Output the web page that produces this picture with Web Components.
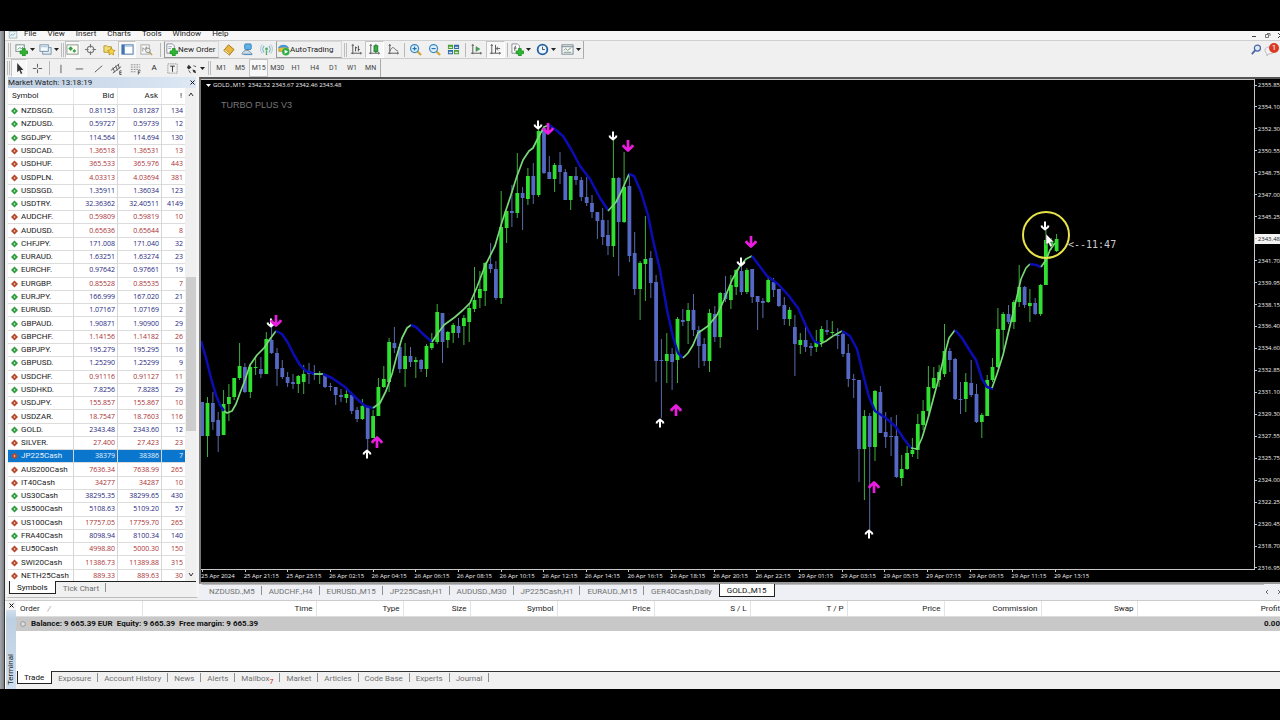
<!DOCTYPE html>
<html lang="en">
<head>
<meta charset="utf-8">
<title>GOLD.,M15</title>
<style>
html,body{margin:0;height:100%;background:#000}
body{overflow:hidden;font-family:Roboto,"Open Sans",sans-serif;font-size:8px;line-height:12px;color:#1c1c1c;--figures:"Open Sans","Noto Sans",sans-serif}
</style>
</head>
<body>
<mt-app></mt-app>
<script>
const define=(name,html,init)=>customElements.define(name,class extends HTMLElement{
  connectedCallback(){
    if(this.shadowRoot)return;
    const root=this.attachShadow({mode:'open'});
    root.innerHTML=typeof html==='function'?html(this):html;
    if(init)init(this,root);
  }
});

/* ---------- icons, drawn on a 14 x 14 grid ---------- */
const CARET='<path d="M0 0h5L2.500 3z" fill="#222"/>';
const AXES='<path d="M3 2v10M1 11h11M2 3l1-1.500L4 3M11 10l1.500 1L11 12" fill="none" stroke="#555"/>';
const PLUS='<path d="M8 6h3v2.500h2.500v3H11V14H8v-2.500H5.500v-3H8z" fill="#2fb52f" stroke="#128a1c" stroke-width=".8"/>';
const ICONS={
  newchart:'<rect x="1" y="2" width="9" height="7" fill="#fff" stroke="#6f8a80"/><path d="M3 7l2-2 2 1 2-2" fill="none" stroke="#4a9a60"/>'+PLUS,
  profiles:'<rect x="4" y="5" width="9" height="7" fill="#e8f0f6" stroke="#6f8fa8"/><rect x="1" y="2" width="9" height="7" fill="#f4f9fc" stroke="#6f8fa8"/><path d="M2 4h7" stroke="#9fc0d8"/>',
  watch:'<rect x="1" y="2" width="12" height="10" fill="#fdfdf6" stroke="#8a958a"/><path d="M5 3.500L7.500 6 5 8.500 2.500 6z" fill="#35a045"/><path d="M9 6.500l2 2-2 2-2-2z" fill="#35a045"/>',
  data:'<circle cx="7" cy="7" r="3.500" fill="none" stroke="#777" stroke-width="1.200"/><path d="M7 1v4M7 9v4M1 7h4M9 7h4" stroke="#777" stroke-width="1.200"/>',
  navigator:'<path d="M1 3h3l1 1h4v6H1z" fill="#f1dc79" stroke="#b6982c"/><path d="M9 5l1.300 2.600 2.900.4-2.100 2 .5 2.900L9 11.500 6.400 12.900l.5-2.900-2.100-2 2.900-.4z" fill="#fbd33c" stroke="#a8861b" stroke-width=".7"/>',
  terminal:'<rect x="1" y="2" width="12" height="10" fill="#fff" stroke="#3f6fa8"/><rect x="1" y="2" width="3" height="10" fill="#3f74b4"/><path d="M4 3.500h9" stroke="#9bb8d8"/>',
  tester:'<rect x="1" y="2" width="9" height="10" fill="#f8f8f8" stroke="#a5a5a5"/><path d="M3 9V5l2 2 2-3v3" fill="none" stroke="#999"/><circle cx="8.500" cy="8" r="2.500" fill="#e6eee6" stroke="#888"/><path d="M10.500 10l2.500 3" stroke="#c29b4a" stroke-width="1.500"/>',
  order:'<path d="M2 1h6l2 2v8H2z" fill="#fff" stroke="#889"/><path d="M3.500 4h4M3.500 6h3" stroke="#8aa"/>'+PLUS,
  editor:'<path d="M2 8l5-6 6 5-5 6z" fill="#e9b63f" stroke="#a87614"/><path d="M2 8l6 5v-2L3.500 7z" fill="#fff0b8" stroke="#a87614" stroke-width=".6"/>',
  community:'<rect x="4" y="1" width="7" height="6" rx="1" fill="#5fb2e6" stroke="#3b82b4"/><path d="M1 12c1-3 3-4 5-4s4 1 6 4z" fill="#cfdfe9" stroke="#6d8ea5"/><path d="M3 12.500h9" stroke="#4a90c0"/>',
  signals:'<circle cx="7" cy="6.500" r="1.600" fill="#5cab6a"/><path d="M4.500 3a5 5 0 000 7M9.500 3a5 5 0 010 7" fill="none" stroke="#6aaec0" stroke-width="1.200"/><path d="M2.500 1.500a7.500 7.500 0 000 10M11.500 1.500a7.500 7.500 0 010 10" fill="none" stroke="#a6c6d0"/><path d="M7 8v5" stroke="#5cab6a" stroke-width="1.500"/>',
  auto:'<path d="M2 6c0-3 10-3 10 0v3H2z" fill="#e9bd3a" stroke="#a07a18" stroke-width=".7"/><path d="M1 5.500c2-5 10-5 12 0-3-1-9-1-12 0z" fill="#4a96d2"/><circle cx="9.500" cy="9.500" r="4" fill="#2fae43"/><path d="M8.200 7.300l3.800 2.200-3.800 2.200z" fill="#fff"/>',
  bars:AXES+'<path d="M6 4v5M9 3v6M6 5h1.500M9 7h1.500" stroke="#444"/>',
  candles:AXES+'<path d="M8.500 1v10" stroke="#1c7a2a"/><rect x="6.500" y="3" width="4" height="6" fill="#35b04a" stroke="#1c7a2a"/>',
  line:AXES+'<path d="M3 9c2-5 4-5 6-2l3 2" fill="none" stroke="#666"/>',
  zoomin:'<path d="M8.500 8.500L13 13" stroke="#d2a93b" stroke-width="2.400"/><circle cx="6" cy="6" r="4.300" fill="#dff0fa" stroke="#3a87c0" stroke-width="1.300"/><path d="M3.800 6h4.400M6 3.800v4.400" stroke="#2474b2" stroke-width="1.300"/>',
  zoomout:'<path d="M8.500 8.500L13 13" stroke="#d2a93b" stroke-width="2.400"/><circle cx="6" cy="6" r="4.300" fill="#dff0fa" stroke="#3a87c0" stroke-width="1.300"/><path d="M3.800 6h4.400" stroke="#2474b2" stroke-width="1.300"/>',
  tile:'<path d="M1 2h5.500v4.500H1zM7.500 7.500H13V12H7.500z" fill="#4a9e36"/><path d="M7.500 2H13v4.500H7.500zM1 7.500h5.500V12H1z" fill="#2f68ad"/><path d="M2 4h3.500v1.500H2zM8.500 4H12v1.500H8.500zM2 9.500h3.500V11H2zM8.500 9.500H12V11H8.500z" fill="#d6e8d4"/>',
  scroll:AXES+'<path d="M6.500 4v5l4-2.500z" fill="#45a555" stroke="#287a38" stroke-width=".6"/>',
  shift:AXES+'<path d="M7 2v9M12 6H8M9.500 4L8 6l1.500 2" fill="none" stroke="#555"/>',
  indicators:'<path d="M1 1h6l2 2v8H1z" fill="#fff" stroke="#889"/><path d="M5.500 3C4 3 4.500 5 4 8.500M3 5.500h3" stroke="#555" fill="none"/>'+PLUS,
  clock:'<circle cx="7" cy="7" r="5.200" fill="#eef6fd" stroke="#2462a4" stroke-width="2"/><path d="M7 4v3h2.500" fill="none" stroke="#345"/>',
  template:'<rect x="1" y="2" width="12" height="10" fill="#f6f8f8" stroke="#718290"/><path d="M1 4h12" stroke="#718290"/><path d="M3 8l2-2 2 2 4-3M3 10h8" fill="none" stroke="#809080"/>',
  cursor:'<path d="M4.500 1v10l2.300-2 1.700 3.800 1.500-.7L8.300 8.500h3z" fill="#333"/>',
  cross:'<path d="M7 2v4M7 8v4M2 7h4M8 7h4" stroke="#555"/>',
  vline:'<path d="M7.500 3v9" stroke="#555"/>',
  hline:'<path d="M3 7.500h8" stroke="#555"/>',
  trend:'<path d="M3 11l8-7" stroke="#555"/>',
  channel:'<path d="M1 9l9-7M3 12l9-7M3 6l2 5M6 4l2 5M9 3l1 4" stroke="#555" fill="none"/><path d="M12.500 9.500h-2v4h2M10.500 11.500h2" stroke="#333" fill="none" stroke-width=".8"/>',
  fibo:'<path d="M2 3h10M2 5.500h10M2 8h10M2 10.500h6" stroke="#888" stroke-dasharray="2 1"/><path d="M10 13.500v-4h2.500M10 11.500h2" stroke="#333" fill="none" stroke-width=".8"/>',
  label:'<rect x="2" y="2" width="10" height="10" fill="none" stroke="#777" stroke-dasharray="1 1"/><path d="M4.500 4.500h5M7 4.500v6" stroke="#333" fill="none"/>',
  arrows:'<path d="M4 3l3 3-3 2-2-2zM8 8l3 1 1 3-3-1z" fill="#333"/><path d="M9 4l3 1M4 9l2 3" stroke="#555"/>',
  search:'<circle cx="8" cy="5.500" r="3.300" fill="#dfe8f6" stroke="#4b66a5" stroke-width="1.300"/><path d="M5.500 8L2 12" stroke="#4b66a5" stroke-width="2"/>',
  chat:'<path d="M1 7c0-4 9-4 9 0s-4 4-6 4l-1 2v-2.500C2 10 1 9 1 7z" fill="#f3f3f3" stroke="#bbb"/>',
  app:'<rect x="1" y="1" width="12" height="10" fill="#e9f2f4" stroke="#8aa5b0"/><path d="M3 8l2-3 2 2 3-4" fill="none" stroke="#6ca0b8"/>'
};
define('mt-icon',el=>`<style>:host{display:block;flex:none;width:14px;height:14px}svg{display:block;width:100%;height:100%}</style>
<svg viewBox="0 0 14 14" aria-hidden="true">${ICONS[el.getAttribute('name')]}</svg>`);

/* A toolbar button: icon, optional label in the slot, optional drop-down caret. */
define('mt-tool',el=>`<style>
:host{display:block;flex:none;width:var(--w,19px);height:100%}
button{all:unset;box-sizing:border-box;display:flex;align-items:center;justify-content:center;gap:2px;width:100%;height:100%;white-space:nowrap}
:host([pressed]) button{background:#f8f8f8;border:1px solid #c4c4c4;border-right-color:#fff;border-bottom-color:#fff}
:host([framed]) button{border:1px solid #d8d8d8;border-left-color:#999;border-bottom-color:#999;justify-content:flex-start;gap:0}
.caret{flex:none;width:5px;height:3px;display:block}
mt-icon{width:13px;height:13px}
</style><button type="button" aria-label="${el.getAttribute('label')||el.textContent}">
${el.hasAttribute('icon')?`<mt-icon name="${el.getAttribute('icon')}"></mt-icon>`:''}<slot></slot>
${el.hasAttribute('menu')?`<svg class="caret" viewBox="0 0 5 3">${CARET}</svg>`:''}</button>`);
define('mt-grip',`<style>:host{display:flex;flex:none;width:var(--w,5px);height:100%;align-items:center;justify-content:center;gap:1px}
i{width:1px;height:14px;background:#bdbdbd}</style><i></i><i></i>`);
define('mt-sep',`<style>:host{display:flex;flex:none;width:var(--w,4px);height:100%;align-items:center;justify-content:center}
i{width:1px;height:14px;background:#b8b8b8}</style><i></i>`);

define('mt-menubar',`<style>
:host{display:flex;height:9px;background:#f7f7f7;border-bottom:1px solid #cfcfcf;padding-left:6px}
nav{display:flex;gap:11px;padding-left:4px}
a{color:#222;text-decoration:none;line-height:6px}
mt-icon{width:14px;height:9px}
.win{margin-left:auto;display:flex;gap:6px;margin-right:-4px}
button{all:unset;width:7px;height:8px}
svg{display:block}
</style><mt-icon name="app"></mt-icon>
<nav>${['File','View','Insert','Charts','Tools','Window','Help'].map(t=>`<a href="#">${t}</a>`).join('')}</nav>
<div class="win"><button type="button" aria-label="Minimize"><svg width="7" height="7"><path d="M1 4.500h4" stroke="#444"/></svg></button>
<button type="button" aria-label="Restore"><svg width="7" height="7"><path d="M1.500 2.500h3v3h-3zM3 1.500h3V4" fill="none" stroke="#777"/></svg></button>
<button type="button" aria-label="Close"><svg width="7" height="7"><path d="M1 1l5 5M6 1L1 6" stroke="#444"/></svg></button></div>`);

define('mt-toolbar',`<style>:host{display:flex;align-items:center;height:18px;box-sizing:border-box;overflow:hidden;background:#f0f0f0;padding-left:6px}
.bar{display:flex;height:100%;box-sizing:border-box;border-right:1px solid #aaa}
:host([lined]) .bar{border-bottom:1px solid #ccc}
.end{margin-left:auto;display:flex}
</style><div class="bar"><slot></slot></div><div class="end"><slot name="end"></slot></div>`);

define('mt-timeframes',`<style>:host{display:grid;grid-template-columns:repeat(9,1fr);width:168px;height:100%;font-size:7px;color:#444}
button{all:unset;text-align:center;box-sizing:border-box;border:1px solid transparent;line-height:16px}
button[aria-pressed=true]{border-color:#c4c4c4;background:#f8f8f8}
</style>${['M1','M5','M15','M30','H1','H4','D1','W1','MN'].map(t=>`<button type="button" aria-pressed="${t==='M15'}">${t}</button>`).join('')}`);

define('mt-badge',`<style>:host{display:block;position:relative;width:16px;height:14px}
b{position:absolute;left:5px;top:0;width:10px;height:10px;border-radius:5px;background:#d93a26;color:#fff;font-size:8px;line-height:10px;text-align:center;font-weight:400}
</style><mt-icon name="chat"></mt-icon><b>1</b>`);

/* ---------- market watch ---------- */
const QUOTES=`NZDSGD.|0.81153|0.81287|134|u
NZDUSD.|0.59727|0.59739|12|u
SGDJPY.|114.564|114.694|130|u
USDCAD.|1.36518|1.36531|13|d
USDHUF.|365.533|365.976|443|d
USDPLN.|4.03313|4.03694|381|d
USDSGD.|1.35911|1.36034|123|u
USDTRY.|32.36362|32.40511|4149|u
AUDCHF.|0.59809|0.59819|10|d
AUDUSD.|0.65636|0.65644|8|d
CHFJPY.|171.008|171.040|32|u
EURAUD.|1.63251|1.63274|23|u
EURCHF.|0.97642|0.97661|19|u
EURGBP.|0.85528|0.85535|7|d
EURJPY.|166.999|167.020|21|u
EURUSD.|1.07167|1.07169|2|u
GBPAUD.|1.90871|1.90900|29|u
GBPCHF.|1.14156|1.14182|26|d
GBPJPY.|195.279|195.295|16|u
GBPUSD.|1.25290|1.25299|9|u
USDCHF.|0.91116|0.91127|11|d
USDHKD.|7.8256|7.8285|29|u
USDJPY.|155.857|155.867|10|d
USDZAR.|18.7547|18.7603|116|d
GOLD.|2343.48|2343.60|12|u
SILVER.|27.400|27.423|23|d
JP225Cash|38379|38386|7|d
AUS200Cash|7636.34|7638.99|265|d
IT40Cash|34277|34287|10|d
US30Cash|38295.35|38299.65|430|u
US500Cash|5108.63|5109.20|57|u
US100Cash|17757.05|17759.70|265|d
FRA40Cash|8098.94|8100.34|140|u
EU50Cash|4998.80|5000.30|150|d
SWI20Cash|11386.73|11389.88|315|d
NETH25Cash|889.33|889.63|30|d`.split('\n').map(l=>l.split('|'));

define('mt-market-watch',`<style>
:host{display:flex;flex-direction:column;width:193px;box-sizing:border-box;background:#f0f0f0;border-right:3px solid #f4f4f4;border-left:2px solid #f4f4f4;min-height:0;margin-bottom:2px;border-bottom:1px solid #bbb}
header{display:flex;justify-content:space-between;align-items:center;height:11px;background:linear-gradient(90deg,#bfcfe2,#dde8f4);font-size:8px;line-height:11px}
header button{all:unset;width:8px;height:11px;display:grid;place-items:center}
.body{flex:1;min-height:0;display:flex;overflow:hidden;background:#fff}
table{flex:none;width:177px;display:flex;flex-direction:column;border-collapse:collapse;margin-bottom:-2px}
tbody{flex:1;display:grid;grid-auto-rows:1fr}
tr{display:grid;grid-template-columns:66px 44px 44px 23px;align-items:stretch}
thead tr{height:17px;border-bottom:1px solid #ddd;box-sizing:border-box}
th,td{padding:0 2px 0 0;box-sizing:border-box;border-right:1px solid #d6d6d6;text-align:right;font-weight:400;white-space:nowrap;line-height:12px}
td{border-bottom:1px solid #dcdcdc;font-family:var(--figures);font-size:7px;display:flex;align-items:center;justify-content:flex-end}
th{border-color:#e8e8e8;line-height:16px;padding-right:3px}
th:first-child{text-align:left;padding-left:4px}
td:first-child{justify-content:flex-start;gap:3px;padding-left:3px;color:#1c1c1c;font-family:Roboto,sans-serif;font-size:8px}
td:last-child,th:last-child{border-right:0}
.u{color:#26267c}.d{color:#a83236}
.sel td,.sel td:first-child{background:#0a76cd;color:#e8f2fc}
svg{flex:none}
.scroll{flex:1;background:#f0f0f0;display:flex;flex-direction:column;align-items:center}
.scroll i{width:10px;height:154px;background:#cdcdcd}
.scroll svg{margin:4px 0}
.gap1{flex:175}.gap2{flex:136}
</style>
<header><span>Market Watch: 13:18:19</span><button type="button" aria-label="Close"><svg width="5" height="5"><path d="M.5 .5l4 4M4.500 .5l-4 4" stroke="#111"/></svg></button></header>
<div class="body"><table><thead><tr><th>Symbol</th><th>Bid</th><th>Ask</th><th>!</th></tr></thead><tbody>
${QUOTES.map(q=>`<tr class="${q[4]}${q[0]==='JP225Cash'?' sel':''}"><td><svg width="7" height="8" viewBox="0 0 7 8"><path d="M3.500 .5L7 4 3.500 7.500 0 4z" fill="${q[4]==='u'?'#2f9a3f':'#b4472c'}"/><path d="M3.500 3l1 1-1 1-1-1z" fill="${q[4]==='u'?'#d5f5d5':'#f6d6c6'}"/></svg>${q[0]}</td><td>${q[1]}</td><td>${q[2]}</td><td>${q[3]}</td></tr>`).join('')}
</tbody></table>
<div class="scroll"><svg width="6" height="5"><path d="M1 4l2-3 2 3" fill="none" stroke="#333"/></svg><span class="gap1"></span><i></i><span class="gap2"></span><svg width="6" height="5"><path d="M1 1l2 3 2-3" fill="none" stroke="#333"/></svg></div></div>
<mt-tabs style="--pad:7px;--h:13px;--lead:1px;--top:#222"><button data-on>Symbols</button><button>Tick Chart</button></mt-tabs>`);

/* Bottom-hanging tabs; the light-DOM buttons give the labels. */
define('mt-tabs',`<style>
:host{display:flex;box-sizing:border-box;padding-left:var(--lead,0);height:calc(var(--h,13px) + var(--foot,3px));background:#f0f0f0;color:#707070}
div{display:flex;flex:1;border-top:1px solid var(--top,#999)}
::slotted(button){all:unset;box-sizing:border-box;height:var(--h,13px);line-height:11px;padding:0 var(--pad,7px) 0 var(--padl,var(--pad,7px));white-space:nowrap;background:linear-gradient(#909090,#909090) right 1px/1px 9px no-repeat}
::slotted(button[data-on]){background:#fff;color:#111;border:1px solid #222;border-top:0;margin-top:-1px;line-height:13px}
::slotted(button[data-last]){background:none}
</style><div><slot></slot></div>`);

/* ---------- chart ---------- */
/* Each bar: high, body top, body bottom, low, direction. */
const BARS=`402,402,436,436,b 397,403,436,457,g 392,403,422,430,b 412,420,436,452,b 390,404,435,435,g 384,397,404,421,g 378,378,397,400,g 343,366,378,380,g 363,367,392,393,b 365,367,392,398,g
357,367,368,375,g 357,369,374,378,b 332,339,374,374,g 325,340,353,354,b 348,353,369,386,b 360,368,377,379,b 372,377,383,387,b 374,382,384,389,b 375,376,384,393,g 365,374,382,394,g
363,371,374,384,b 365,373,375,380,b 371,374,375,384,g 375,375,387,388,b 383,386,387,391,b 387,387,395,405,b 389,395,397,402,b 390,394,398,403,g 395,395,411,414,b 407,410,419,422,b
399,406,419,420,g 407,407,439,450,b 410,416,438,438,g 378,387,416,416,g 366,379,387,388,g 338,342,382,392,g 327,343,348,353,b 344,347,369,373,b 343,356,369,387,g 347,356,362,367,b
357,360,362,378,g 359,360,369,372,b 344,346,369,377,g 333,343,348,350,g 304,312,342,344,g 313,313,342,363,b 331,332,340,348,g 323,325,333,343,g 318,326,333,338,b 315,318,326,345,g
303,308,322,342,g 267,300,309,312,g 271,289,298,308,g 262,263,291,306,g 243,264,269,273,b 261,269,298,300,b 191,227,298,304,g 211,211,228,243,g 185,211,213,227,b 153,193,213,218,g
187,193,198,230,b 168,176,199,205,g 163,176,195,204,b 127,131,195,197,g 128,128,173,174,b 156,172,179,179,b 163,165,179,192,g 152,165,172,184,b 169,172,200,200,b 176,176,200,210,g
167,176,180,185,b 177,180,197,201,b 177,197,203,206,b 195,203,212,218,b 212,212,221,239,b 208,220,237,245,b 220,235,246,255,b 140,178,246,257,g 177,178,222,276,b 152,187,222,223,g
173,186,256,262,b 232,253,289,295,b 261,263,289,320,g 216,259,264,301,g 251,258,283,298,b 275,282,361,382,b 339,360,361,418,b 333,354,361,383,g 348,354,362,390,b 317,319,360,383,g
309,320,322,326,b 303,310,321,344,g 294,310,330,336,b 326,330,346,368,b 338,344,361,366,b 309,313,361,372,g 306,314,337,342,b 292,293,337,348,g 276,293,299,302,b 275,285,300,309,g
269,270,287,295,g 263,271,292,295,b 268,270,292,294,g 269,269,297,303,b 296,296,302,330,b 298,301,303,318,b 277,280,302,303,g 278,282,290,297,b 289,289,306,307,b 297,305,319,325,b
307,310,319,326,g 315,327,344,376,b 333,340,345,354,g 327,340,347,352,b 343,346,348,356,b 330,342,347,352,g 326,329,342,347,g 320,330,332,335,b 321,332,333,335,g 328,335,336,349,b
332,334,354,357,b 344,353,379,387,b 374,379,380,398,b 380,380,449,482,b 410,416,449,500,g 413,416,447,530,b 390,391,447,461,g 386,392,433,433,b 412,432,437,448,b 417,436,437,456,b
415,436,477,478,b 455,469,478,486,g 446,453,469,470,g 438,450,454,457,g 414,424,450,459,g 400,411,425,430,g 366,387,411,417,g 367,378,388,389,g 365,372,380,387,g 324,351,374,377,g
348,351,360,372,b 358,359,399,400,b 382,399,400,414,b 373,382,399,412,g 360,383,395,397,b 384,394,422,423,b 413,415,422,438,g 375,380,416,416,g 358,367,380,382,g 308,329,367,368,g
312,314,330,350,g 305,314,322,324,b 300,302,322,329,g 265,287,302,307,g 286,287,305,308,b 289,303,306,322,g 298,303,314,315,b 284,285,314,316,g 230,240,285,285,g 238,242,245,250,g 234,239,251,252,g`.split(/\s+/).map(s=>s.split(','));
const MA=[
['b','201,341 206,358 211,378 216,395 220,405 224,411'],
['g','224,411 227,413 232,411 236,404 240,393 245,380 250,365 257,355 264,348 270,339 276,331'],
['b','276,331 282,334 288,343 294,355 300,365 306,371 312,373 316,374'],
['g','314,374 323,374'],
['b','323,374 332,378 345,387 357,399 365,406 373,408'],
['g','373,408 380,403 386,391 392,374 397,355 402,338 407,328 411,325'],
['b','411,325 416,327 423,334 432,342'],
['g','432,342 438,333 444,325 455,317 463,310 470,303 477,287 485,266 495,246 502,222 510,198 517,176 523,160 529,151 533,148 539,136 544,127 549,125'],
['b','549,125 556,130 563,136 571,149 580,166 590,179 600,198 608,210'],
['g','608,211 616,202 622,190 629,174'],
['b','629,174 634,176 641,192 648,215 653,240 660,270 667,310 673,337 678,353 683,358'],
['g','683,358 688,353 693,345 698,333 708,326 717,315 724,300 732,280 740,266 746,259 752,256'],
['b','752,256 758,264 767,276 778,284 789,296 798,308 806,326 814,341 820,344'],
['g','820,344 826,341 833,336 842,331'],
['b','842,331 850,336 857,349 863,374 869,397 875,411 886,418 896,427 904,439 911,448'],
['g','911,448 917,449 922,438 929,415 938,381 944,357 949,338 955,330'],
['b','955,330 962,338 970,351 976,360 982,379 987,387 993,389'],
['g','992,388 997,374 1003,355 1009,330 1015,305 1021,279 1026,268 1030,264'],
['b','1030,264 1036,265 1041,267'],
['g','1041,267 1046,260 1050,250 1055,243']];
const SIGNALS=[[271,323,'w',0],[276,321,'m',0],[538,125,'w',0],[548,129,'m',0],[613,136,'w',0],[628,146,'m',0],[741,262,'w',0],[751,242,'m',0],[1045,226,'w',0],
[367,454,'w',1],[377,442,'m',1],[660,423,'w',1],[676,410,'m',1],[869,534,'w',1],[874,487,'m',1]];
const PRICES='2355.85 2354.10 2352.30 2350.55 2348.75 2347.00 2345.25 2343.48 2341.70 2339.95 2338.15 2336.40 2334.60 2332.85 2331.10 2329.30 2327.55 2325.75 2324.00 2322.25 2320.45 2318.70 2316.95'.split(' ');
const TIMES='25 Apr 2024|25 Apr 21:15|25 Apr 23:15|26 Apr 02:15|26 Apr 04:15|26 Apr 06:15|26 Apr 08:15|26 Apr 10:15|26 Apr 12:15|26 Apr 14:15|26 Apr 16:15|26 Apr 18:15|26 Apr 20:15|26 Apr 22:15|29 Apr 01:15|29 Apr 03:15|29 Apr 05:15|29 Apr 07:15|29 Apr 09:15|29 Apr 11:15|29 Apr 13:15'.split('|');
function drawPlot(){
  const x=i=>(202.2+5.34*i).toFixed(1);
  const bars=BARS.map(([h,t,b,l,c],i)=>`<path class="k${c}" d="M${x(i)} ${h}V${l}"/><rect class="${c}" x="${(+x(i)-1.9).toFixed(1)}" y="${t}" width="3.800" height="${Math.max(1,b-t)}"/>`).join('');
  const ma=MA.map(([c,p])=>`<polyline class="m${c}" points="${p}"/>`).join('');
  const arrows=SIGNALS.map(([ax,ay,k,up])=>`<path class="${k}" transform="translate(${ax} ${ay})${up?' rotate(180)':''}" d="${k==='w'?'M0-4.500V3M-3.500-.5L-3 1 0 3.500 3 1 3.500-.5':'M0-6V4M-5-1L-4 .8 0 4.500 4 .8 5-1'}"/>`).join('');
  return `<svg class="plot" aria-label="GOLD M15 candlestick chart"><g transform="translate(-201 -80)">${bars}${ma}${arrows}
<path d="M1046 234l0 11 2.500-2 2 4 2-1-2-4 3.500 0z" fill="#fff" stroke="#333" stroke-width=".5"/>
<circle cx="1046" cy="235" r="23" fill="none" stroke="#e6e34a" stroke-width="2"/>
<text x="1068" y="248">&lt;--11:47</text></g></svg>`;
}
define('mt-chart',`<style>
:host{display:grid;grid-template-columns:minmax(0,1fr) 25px;grid-template-rows:minmax(0,1fr) 12px;background:#000;color:#f0f0f0;border-left:2px solid #777;border-top:2px solid #555;border-bottom:2px solid #999;overflow:hidden;min-height:0;font-family:var(--figures);font-size:6px;line-height:10px}
.main{display:grid;border:1px solid #c8c8c8;border-left:0;min-width:0;min-height:0}
.main>*{grid-area:1/1}
.plot{width:100%;height:100%;display:block;min-height:0}
.cap{padding:0 5px}
.cap p{margin:0;display:flex;gap:2px;align-items:center;white-space:pre}
.cap .name{margin:9px 0 0 15px;font:9px/12px "Liberation Sans",sans-serif;color:#787878}
.b{fill:#5468c4}.g{fill:#30e030}
.kb{stroke:#5a6ca8}.kg{stroke:#3fae3f}
polyline{fill:none;stroke-linejoin:round}
.mb{stroke:#0c0cb4;stroke-width:2.500}.mg{stroke:#78d878;stroke-width:1.700}
.w,.m{fill:none;stroke:#fff;stroke-width:2;stroke-linejoin:round}.m{stroke:#ea1ce0;stroke-width:2.700}
text{font:10px "DejaVu Sans Mono","Liberation Mono",monospace;fill:#ccc}
.prices{display:flex;flex-direction:column;justify-content:space-between;padding-top:1px;margin-bottom:-3px}
.prices span{white-space:nowrap;height:10px;display:flex;align-items:center}
.prices span::before{content:"";width:2px;height:1px;background:#c8c8c8;margin-right:1px}
.prices .now{background:#f4f4f4;color:#222}
.times{display:grid;grid-template-columns:repeat(21,minmax(0,1fr));width:83%;white-space:nowrap;grid-column:1/-1}
.times span{line-height:12px;background:linear-gradient(#c8c8c8,#c8c8c8) 1px 0/1px 2px no-repeat}
</style>
<div class="main">${drawPlot()}<div class="cap"><p><svg width="5" height="3">${CARET.replace('#222','#fff')}</svg>GOLD.,M15  2342.52 2343.67 2342.46 2343.48</p><p class="name">TURBO PLUS V3</p></div></div>
<div class="prices">${PRICES.map(p=>`<span${p==='2343.48'?' class="now"':''}>${p}</span>`).join('')}</div>
<div class="times">${TIMES.map(t=>`<span>${t}</span>`).join('')}</div>`);

/* ---------- terminal ---------- */
const COLS=[['Order',126],['Time',174],['Type',87],['Size',67],['Symbol',87],['Price',97],['S / L',96],['T / P',97],['Price',97],['Commission',97],['Swap',96],['Profit',0]];
define('mt-terminal',`<style>
:host{display:grid;grid-template-columns:10px minmax(0,1fr);background:#fff;border-top:1px solid #ccc;padding-left:6px;overflow:hidden;min-height:89px;box-sizing:border-box}
aside{display:flex;flex-direction:column;justify-content:space-between;align-items:center;background:linear-gradient(#e8eff6,#bdd0e2 20%,#cfdeec);padding-bottom:4px}
aside button{all:unset;background:#f4f4f4;width:10px;height:9px;display:grid;place-items:center}
aside span{writing-mode:vertical-rl;transform:rotate(180deg);line-height:10px}
section{display:flex;flex-direction:column;min-width:0}
table{table-layout:fixed;border-collapse:collapse;width:100%;flex:none}
th{height:15px;padding:0 3px 0 0;text-align:right;font-weight:400;border-right:1px solid #e4e4e4;border-bottom:1px solid #ddd;line-height:15px}
th:first-child{text-align:left;padding-left:4px}
th:last-child{padding:0;border-right:0}
th i{color:#999;margin-left:8px}
td{background:#c8c8c8;height:14px;padding:0;font-weight:700;line-height:14px;white-space:pre;color:#111}
td:last-child{text-align:right}
td svg{vertical-align:-1px;margin:0 5px 0 4px}
mt-tabs{margin-top:auto;--padl:6px;--pad:7px;--h:13px;--foot:5px;--lead:1px;--top:#333}
</style>
<aside><button type="button" aria-label="Close"><svg width="5" height="5"><path d="M.5 .5l4 4M4.500 .5l-4 4" stroke="#111"/></svg></button><span>Terminal</span></aside>
<section><table><colgroup>${COLS.map(c=>`<col${c[1]?` style="width:${c[1]}px"`:''}>`).join('')}</colgroup>
<thead><tr>${COLS.map((c,i)=>`<th>${c[0]}${i?'':'<i>/</i>'}</th>`).join('')}</tr></thead>
<tbody><tr><td colspan="11"><svg width="6" height="6"><circle cx="3" cy="3" r="2.400" fill="#ddd" stroke="#999"/></svg>Balance: 9 665.39 EUR  Equity: 9 665.39  Free margin: 9 665.39</td><td>0.00</td></tr></tbody></table>
<mt-tabs><button data-on>Trade</button><button>Exposure</button><button>Account History</button><button>News</button><button>Alerts</button><button>Mailbox<sub style="font-size:7px;line-height:6px;color:#c22">7</sub></button><button>Market</button><button>Articles</button><button>Code Base</button><button>Experts</button><button>Journal</button></mt-tabs></section>`);

define('mt-app',`<style>
:host{display:flex;flex-direction:column;height:100vh;box-sizing:border-box;padding:31px 0 31px;overflow:hidden}
.window{flex:1;min-height:0;display:flex;flex-direction:column;background:linear-gradient(90deg,#a4a8ac,#7c8084 4px,#333 4px,#333 5px,#f0f0f0 5px)}
mt-menubar,mt-toolbar,.work,mt-terminal{margin-left:5px}
mt-menubar,mt-toolbar{padding-left:1px}
mt-terminal{padding-left:1px}
.work{flex:1;min-height:0;display:grid;grid-template-columns:auto minmax(0,1fr);padding-left:1px}
.right{display:flex;flex-direction:column;min-height:0;min-width:0}
mt-chart{flex:1}
.ctabs{display:flex;background:#eef0f5;align-items:center}
.ctabs mt-tabs{flex:1;--pad:7px;--h:13px;--lead:3px;--top:#bbb;background:none}
.ctabs svg{flex:none}
</style>
<div class="window">
<mt-menubar></mt-menubar>
<mt-toolbar lined>
<mt-grip style="--w:6px"></mt-grip><mt-tool icon="newchart" menu label="New chart" style="--w:25px"></mt-tool><mt-tool icon="profiles" menu label="Profiles" style="--w:23px"></mt-tool>
<mt-grip></mt-grip><mt-tool icon="watch" pressed label="Market Watch" style="--w:15px"></mt-tool><mt-tool icon="data" label="Data Window" style="--w:20px"></mt-tool><mt-tool icon="navigator" label="Navigator" style="--w:18px"></mt-tool><mt-tool icon="terminal" pressed label="Terminal" style="--w:18px"></mt-tool><mt-tool icon="tester" label="Strategy Tester" style="--w:20px"></mt-tool>
<mt-sep style="--w:8px"></mt-sep><mt-tool icon="order" framed style="--w:55px">New Order</mt-tool>
<mt-tool icon="editor" label="MetaEditor"></mt-tool><mt-tool icon="community" label="Community"></mt-tool><mt-tool icon="signals" label="Signals"></mt-tool>
<mt-tool icon="auto" framed style="--w:66px">AutoTrading</mt-tool><mt-grip style="--w:6px"></mt-grip>
<mt-tool icon="bars" label="Bar chart" style="--w:17px"></mt-tool><mt-tool icon="candles" pressed label="Candlesticks"></mt-tool><mt-tool icon="line" label="Line chart"></mt-tool>
<mt-sep style="--w:3px"></mt-sep><mt-tool icon="zoomin" label="Zoom in"></mt-tool><mt-tool icon="zoomout" label="Zoom out"></mt-tool><mt-tool icon="tile" label="Tile windows"></mt-tool>
<mt-sep></mt-sep><mt-tool icon="scroll" label="Auto scroll"></mt-tool><mt-tool icon="shift" pressed label="Chart shift"></mt-tool>
<mt-sep></mt-sep><mt-tool icon="indicators" menu label="Indicators" style="--w:24px"></mt-tool><mt-tool icon="clock" menu label="Periods" style="--w:25px"></mt-tool><mt-tool icon="template" menu label="Templates" style="--w:25px"></mt-tool>
<mt-tool slot="end" icon="search" label="Search" style="--w:16px"></mt-tool><mt-badge slot="end"></mt-badge>
</mt-toolbar>
<mt-toolbar>
<mt-grip></mt-grip><mt-tool icon="cursor" pressed label="Cursor" style="--w:16px"></mt-tool><mt-tool icon="cross" label="Crosshair" style="--w:21px"></mt-tool>
<mt-sep style="--w:3px"></mt-sep><mt-tool icon="vline" label="Vertical line"></mt-tool><mt-tool icon="hline" label="Horizontal line"></mt-tool><mt-tool icon="trend" label="Trendline" style="--w:18px"></mt-tool><mt-tool icon="channel" label="Channel"></mt-tool><mt-tool icon="fibo" label="Fibonacci"></mt-tool><mt-tool style="--w:18px">A</mt-tool><mt-tool icon="label" label="Text label"></mt-tool><mt-tool icon="arrows" menu label="Arrows" style="--w:25px"></mt-tool>
<mt-grip></mt-grip><mt-timeframes></mt-timeframes>
</mt-toolbar>
<div class="work"><mt-market-watch></mt-market-watch>
<div class="right"><mt-chart></mt-chart>
<div class="ctabs"><mt-tabs><button>NZDUSD.,M5</button><button>AUDCHF.,H4</button><button>EURUSD.,M15</button><button>JP225Cash,H1</button><button>AUDUSD.,M30</button><button>JP225Cash,H1</button><button>EURAUD.,M15</button><button data-last>GER40Cash,Daily</button><button data-on>GOLD.,M15</button></mt-tabs>
<svg width="16" height="6"><path d="M4 1L2 3l2 2M14 1l2 2-2 2" fill="none" stroke="#667"/></svg></div></div></div>
<mt-terminal></mt-terminal>
</div>`);
</script>
</body>
</html>
